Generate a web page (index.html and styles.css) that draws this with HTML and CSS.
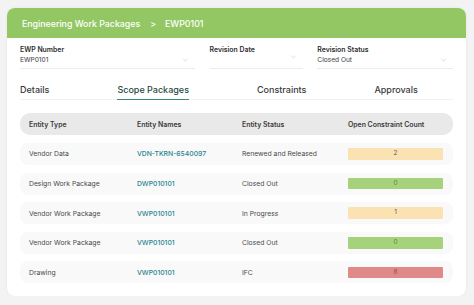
FILE: index.html
```html
<!DOCTYPE html>
<html>
<head>
<meta charset="utf-8">
<link rel="stylesheet" href="styles.css">
</head>
<body>
<div class="card">
  <div class="head">
    <span>Engineering Work Packages</span>
    <span class="sep">&gt;</span>
    <span>EWP0101</span>
  </div>
  <div class="fields">
    <div class="field f1">
      <div class="label">EWP Number</div>
      <div class="value"><span>EWP0101</span><svg class="chev" viewBox="0 0 6 4"><path d="M0.5 0.8 L3 3.2 L5.5 0.8" fill="none" stroke="#c4c4c4" stroke-width="0.8"/></svg></div>
    </div>
    <div class="field f2">
      <div class="label">Revision Date</div>
      <div class="value"><span></span><svg class="chev" viewBox="0 0 6 4"><path d="M0.5 0.8 L3 3.2 L5.5 0.8" fill="none" stroke="#c4c4c4" stroke-width="0.8"/></svg></div>
    </div>
    <div class="field f3">
      <div class="label">Revision Status</div>
      <div class="value"><span>Closed Out</span><svg class="chev" viewBox="0 0 6 4"><path d="M0.5 0.8 L3 3.2 L5.5 0.8" fill="none" stroke="#c4c4c4" stroke-width="0.8"/></svg></div>
    </div>
  </div>
  <div class="tabs">
    <div class="tab">Details</div>
    <div class="tab active">Scope Packages</div>
    <div class="tab">Constraints</div>
    <div class="tab">Approvals</div>
  </div>
  <div class="table">
    <div class="row thead">
      <div>Entity Type</div>
      <div>Entity Names</div>
      <div>Entity Status</div>
      <div>Open Constraint Count</div>
    </div>
    <div class="row">
      <div>Vendor Data</div>
      <div class="link">VDN-TKRN-6540097</div>
      <div>Renewed and Released</div>
      <div><span class="badge yellow">2</span></div>
    </div>
    <div class="row">
      <div>Design Work Package</div>
      <div class="link">DWP010101</div>
      <div>Closed Out</div>
      <div><span class="badge green">0</span></div>
    </div>
    <div class="row">
      <div>Vendor Work Package</div>
      <div class="link">VWP010101</div>
      <div>In Progress</div>
      <div><span class="badge yellow">1</span></div>
    </div>
    <div class="row">
      <div>Vendor Work Package</div>
      <div class="link">VWP010101</div>
      <div>Closed Out</div>
      <div><span class="badge green">0</span></div>
    </div>
    <div class="row">
      <div>Drawing</div>
      <div class="link">VWP010101</div>
      <div>IFC</div>
      <div><span class="badge red">8</span></div>
    </div>
  </div>
</div>
</body>
</html>
```
FILE: styles.css
```css
* { box-sizing: border-box; }
html, body { margin: 0; }
body {
  background: #f3f3f3;
  padding: 8px 8px 0 7px;
  font-family: Inter, "Noto Sans", sans-serif;
  color: #3a3a3a;
}
.card {
  width: 459px;
  height: 288px;
  background: #fff;
  border-radius: 8px;
  box-shadow: 0 0 3px rgba(0,0,0,0.06);
  overflow: hidden;
}
.head {
  height: 30px;
  background: #93c764;
  display: flex;
  align-items: center;
  padding-left: 15px;
  color: #fff;
  font-size: 8.8px;
  font-weight: 500;
}
.head .sep { margin: 0 9px 0 10px; }
.fields {
  display: flex;
  gap: 15px;
  padding: 7px 13px 0;
}
.f1 { width: 175px; }
.f2 { width: 94px; }
.f3 { width: 136px; margin-left: -1px; }
.field { border-bottom: 1px solid #ececec; padding-bottom: 3px; }
.label {
  font-size: 6.9px;
  font-weight: 600;
  color: #2e2e2e;
  line-height: 10px;
}
.value {
  display: flex;
  justify-content: space-between;
  align-items: center;
  font-size: 6.6px;
  line-height: 10px;
  color: #3a3a3a;
  padding-right: 7px;
}
.chev { width: 5px; height: 4px; }
.tabs {
  display: flex;
  gap: 68px;
  margin: 14px 13px 0;
  border-bottom: 1px solid #f2f2f2;
}
.tab {
  font-size: 9px;
  font-weight: 500;
  color: #3a3a3a;
  line-height: 14px;
  padding-bottom: 2px;
  border-bottom: 1px solid transparent;
  margin-bottom: -1px;
}
.tab.active {
  color: #2a4a44;
  border-bottom-color: #3b8a7c;
}
.table {
  margin: 13px 13px 0;
  display: flex;
  flex-direction: column;
  gap: 7.6px;
}
.row {
  display: grid;
  grid-template-columns: 108px 105px 106px 95px;
  align-items: center;
  height: 22px;
  padding-left: 9px;
  background: #f9f9f9;
  border-radius: 8px;
  font-size: 6.8px;
  color: #4a4a4a;
}
.row.thead {
  background: #e9e9e9;
  border-radius: 10px;
  font-weight: 600;
  color: #3a3a3a;
  font-size: 6.9px;
  margin-bottom: 0.4px;
}
.link { color: #1f8590; font-weight: 500; }
.badge {
  display: block;
  width: 95px;
  height: 11.5px;
  line-height: 11.5px;
  text-align: center;
  font-size: 6.5px;
  border-radius: 1px;
  color: #5a5a5a;
}
.yellow { background: #fbe2b3; }
.green { background: #a6d27c; color: #5d8a3a; }
.red { background: #df8a89; color: #9a4747; }
```
